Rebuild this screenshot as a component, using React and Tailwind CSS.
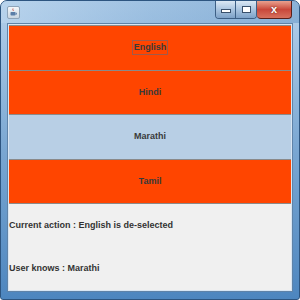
import React from 'react';

const rows = [
  { label: 'English', bg: 'bg-[#ff4500]', focus: true },
  { label: 'Hindi', bg: 'bg-[#ff4500]' },
  { label: 'Marathi', bg: 'bg-[#b8cfe5]' },
  { label: 'Tamil', bg: 'bg-[#ff4500]' },
];

function JavaIcon() {
  return (
    <div className="w-[13px] h-[13px] rounded-[2px] bg-gradient-to-b from-[#f4f7fa] to-[#c9d6e2] border border-[#8ea4b9] flex items-center justify-center">
      <svg width="9" height="9" viewBox="0 0 9 9">
        <path d="M4 0.5 C3 1.5 5 2 4 3" stroke="#c0392b" strokeWidth="0.8" fill="none" />
        <rect x="1.5" y="4" width="5" height="3.5" rx="0.8" fill="#5b7ea8" />
        <path d="M6.5 5 h1 v1.3 h-1" stroke="#5b7ea8" strokeWidth="0.8" fill="none" />
      </svg>
    </div>
  );
}

export default function App() {
  return (
    <div className="w-[300px] h-[300px] rounded-t-[7px] rounded-b-[3px] border border-[#2d5580] bg-gradient-to-b from-[#b4d0ea] via-[#7aa7d2] to-[#4d86bf] flex flex-col font-['Liberation_Sans',Arial,sans-serif] overflow-hidden">
      {/* title bar */}
      <div className="h-[22px] flex items-start justify-between shrink-0 bg-gradient-to-r from-[#bcd6ee]/60 via-[#6e9fcf]/30 to-[#4f86bc]/40">
        <div className="pl-[6px] pt-[5px]">
          <JavaIcon />
        </div>
        <div className="flex items-start mr-[7px]">
          <div className="flex h-[18px] rounded-b-[4px] border border-t-0 border-[#3d5f85] overflow-hidden">
            <div className="w-[20px] h-full bg-gradient-to-b from-[#dbe8f4] via-[#a9c4df] to-[#7ea2c8] border-r border-[#3d5f85] flex items-end justify-center pb-[5px]">
              <div className="w-[8px] h-[2px] bg-white border border-[#39506b] box-content" />
            </div>
            <div className="w-[20px] h-full bg-gradient-to-b from-[#dbe8f4] via-[#a9c4df] to-[#7ea2c8] flex items-center justify-center">
              <div className="w-[7px] h-[5px] border-[2px] border-t-[3px] border-white outline outline-1 outline-[#39506b]" />
            </div>
          </div>
          <div className="w-[35px] h-[18px] rounded-b-[4px] border border-t-0 border-l-0 border-[#5a1f1a] bg-gradient-to-b from-[#e8a08f] via-[#c9473a] to-[#d7705e] flex items-center justify-center">
            <span className="text-white font-bold text-[11px] leading-none [text-shadow:0_0_2px_#5a1f1a]">x</span>
          </div>
        </div>
      </div>

      {/* content */}
      <div className="flex-1 mx-[6px] mb-[7px] border border-[#5f83a8] flex flex-col">
        <div className="flex-1 border border-[#d8e6f3] bg-[#f0f0f0] flex flex-col">
          <div className="h-[179px] flex flex-col border-t border-[#8a8a8a]">
            {rows.map((r) => (
              <div
                key={r.label}
                className={`flex-1 ${r.bg} border-b border-[#8a8a8a] flex items-center justify-center`}
              >
                <span
                  className={`text-[9px] font-bold text-[#3a3a3a] leading-none ${
                    r.focus ? 'px-[1px] py-[2px] border border-[#a05a4a]' : ''
                  }`}
                >
                  {r.label}
                </span>
              </div>
            ))}
          </div>
          <div className="flex-1 flex flex-col">
            <div className="flex-1 flex items-center">
              <span className="text-[9px] font-bold text-[#333]">Current action : English is de-selected</span>
            </div>
            <div className="flex-1 flex items-center">
              <span className="text-[9px] font-bold text-[#333]">User knows : Marathi</span>
            </div>
          </div>
        </div>
      </div>
    </div>
  );
}
